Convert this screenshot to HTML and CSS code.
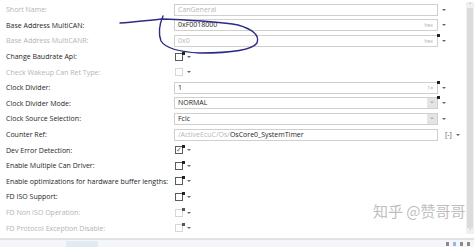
FILE: index.html
```html
<!DOCTYPE html>
<html lang="en">
<head>
    <meta charset="UTF-8">
    <title>CanGeneral</title>
    <link rel="stylesheet" href="styles.css">
</head>
<body>
    <div id="app">
        <div class="main">
            <div class="form">
                <div class="row off">
                    <label>Short Name:</label>
                    <div class="val"><span class="box dim">CanGeneral</span><i class="dd"></i></div>
                </div>
                <div class="row">
                    <label>Base Address MultiCAN:</label>
                    <div class="val"><span class="box">0xF0018000<em>hex</em></span><i class="dd"></i></div>
                </div>
                <div class="row off">
                    <label>Base Address MultiCANR:</label>
                    <div class="val"><span class="box dim">0x0<em>hex</em><b class="mark"></b></span><i class="dd"></i></div>
                </div>
                <div class="row">
                    <label>Change Baudrate Api:</label>
                    <div class="val"><span class="chk"><b class="mark"></b></span><i class="dd"></i></div>
                </div>
                <div class="row off">
                    <label>Check Wakeup Can Ret Type:</label>
                    <div class="val"><span class="chk light"></span><i class="dd"></i></div>
                </div>
                <div class="row">
                    <label>Clock Divider:</label>
                    <div class="val"><span class="box">1<em>1=</em><b class="mark"></b></span><i class="dd"></i></div>
                </div>
                <div class="row">
                    <label>Clock Divider Mode:</label>
                    <div class="val"><span class="box">NORMAL<span class="btn">&#8964;</span><b class="mark"></b></span><i class="dd"></i></div>
                </div>
                <div class="row">
                    <label>Clock Source Selection:</label>
                    <div class="val"><span class="box">Fclc<span class="btn">&#8964;</span></span><i class="dd"></i></div>
                </div>
                <div class="row">
                    <label>Counter Ref:</label>
                    <div class="val"><span class="box"><span class="path">/ActiveEcuC/Os/</span>OsCore0_SystemTimer</span><span class="ref">[-]</span><i class="dd"></i></div>
                </div>
                <div class="row">
                    <label>Dev Error Detection:</label>
                    <div class="val"><span class="chk on">&#10003;<b class="mark"></b></span><i class="dd"></i></div>
                </div>
                <div class="row">
                    <label>Enable Multiple Can Driver:</label>
                    <div class="val"><span class="chk"><b class="mark"></b></span><i class="dd"></i></div>
                </div>
                <div class="row">
                    <label>Enable optimizations for hardware buffer lengths:</label>
                    <div class="val"><span class="chk"><b class="mark"></b></span><i class="dd"></i></div>
                </div>
                <div class="row">
                    <label>FD ISO Support:</label>
                    <div class="val"><span class="chk"><b class="mark"></b></span><i class="dd"></i></div>
                </div>
                <div class="row off">
                    <label>FD Non ISO Operation:</label>
                    <div class="val"><span class="chk light"><b class="mark"></b></span><i class="dd"></i></div>
                </div>
                <div class="row off">
                    <label>FD Protocol Exception Disable:</label>
                    <div class="val"><span class="chk light"><b class="mark"></b></span><i class="dd"></i></div>
                </div>
            </div>
            <div class="scroll">
                <span class="arrow">&#708;</span>
                <div class="thumb"></div>
                <span class="arrow">&#709;</span>
            </div>
        </div>
        <div class="footer">
            <span class="tab"></span>
            <span class="icons"><i></i><i class="blue"></i><i></i><i></i></span>
        </div>

        <!-- 手画的圈 -->
        <svg class="ink" width="474" height="247" viewBox="0 0 474 247">
            <path d="M120 23 C135 22 150 20 163 19 C185 20 215 21 238 25 C252 29 260 35 257 43 C252 50 232 53 200 53 C180 52 166 49 161 41 C158 33 160 23 163 16"
                  fill="none" stroke="#2c2c86" stroke-width="1.4" stroke-linecap="round"/>
        </svg>
        <div class="water">知乎 @赞哥哥</div>
    </div>
</body>
</html>
```

FILE: styles.css
```css
*{
    margin: 0;
    padding: 0;
    box-sizing: border-box;
}
body{
    background-color: #fff;
    font-family: "Open Sans", "Noto Sans", sans-serif;
    font-size: 7px;
    color: #1e1e1e;
}
#app{
    position: relative;
    width: 474px;
    height: 247px;
    overflow: hidden;

    display: flex;
    flex-direction: column;
}
.main{
    flex: 1;
    display: flex;
}
.form{
    flex: 1;
    padding-top: 2px;
}
.row{
    height: 15.6px;
    display: grid;
    grid-template-columns: 168px 1fr;
    align-items: center;
    padding-left: 6px;
    white-space: nowrap;
}
.row.off > label{
    color: #b4b4b4;
}
.val{
    display: flex;
    align-items: center;
    height: 100%;
}
.box{
    position: relative;
    width: 264px;
    height: 12px;
    border: 1px solid #cfcfcf;
    padding: 0 3px;
    display: flex;
    align-items: center;
    line-height: 10px;
}
.box.dim{
    color: #b8b8b8;
}
.box em{
    position: absolute;
    right: 4px;
    font-style: normal;
    font-size: 5px;
    color: #aaa;
}
.box .btn{
    position: absolute;
    right: 0;
    top: 0;
    width: 10px;
    height: 10px;
    background-color: #e4e4e4;
    color: #888;
    font-size: 7px;
    text-align: center;
    line-height: 6px;
}
.path{
    color: #b8b8b8;
}
.ref{
    margin-left: 7px;
    color: #555;
    font-size: 7px;
}
.mark{
    position: absolute;
    right: -3px;
    top: -2px;
    width: 3px;
    height: 3px;
    background-color: #222;
}
.chk{
    position: relative;
    width: 8px;
    height: 8px;
    margin-left: 1px;
    border: 1px solid #5a5a5a;
    font-size: 7px;
    line-height: 6px;
    color: #3d6e45;
    text-align: center;
}
.chk.light{
    border-color: #d6d6d6;
}
.chk.light .mark{
    background-color: #555;
}
.dd{
    width: 0;
    height: 0;
    margin-left: 4px;
    border-left: 2px solid transparent;
    border-right: 2px solid transparent;
    border-top: 2.5px solid #666;
}
.scroll{
    width: 8px;
    margin: 2px 0 4px;
    display: flex;
    flex-direction: column;
    align-items: center;
    background-color: #f0f0f0;
}
.arrow{
    font-size: 6px;
    color: #666;
    line-height: 6px;
}
.thumb{
    flex: 1;
    width: 6px;
    background-color: #dcdcdc;
}
.footer{
    height: 9px;
    border-top: 2px solid #e2e2e2;
    background-color: #f4f6fa;
    display: flex;
    align-items: center;
    padding: 0 4px 0 66px;
}
.tab{
    width: 32px;
    height: 6px;
    background-color: #e2eaf5;
}
.icons{
    margin-left: auto;
    display: flex;
    gap: 4px;
}
.icons i{
    width: 3px;
    height: 4px;
    background-color: #8a8a8a;
}
.icons i.blue{
    background-color: #9ab6e0;
}
.ink{
    position: absolute;
    left: 0;
    top: 0;
    pointer-events: none;
}
.water{
    position: absolute;
    left: 373px;
    top: 201px;
    white-space: nowrap;
    font-family: "Noto Sans CJK SC", sans-serif;
    font-size: 15px;
    line-height: 20px;
    color: rgba(160, 160, 160, 0.7);
}
```
